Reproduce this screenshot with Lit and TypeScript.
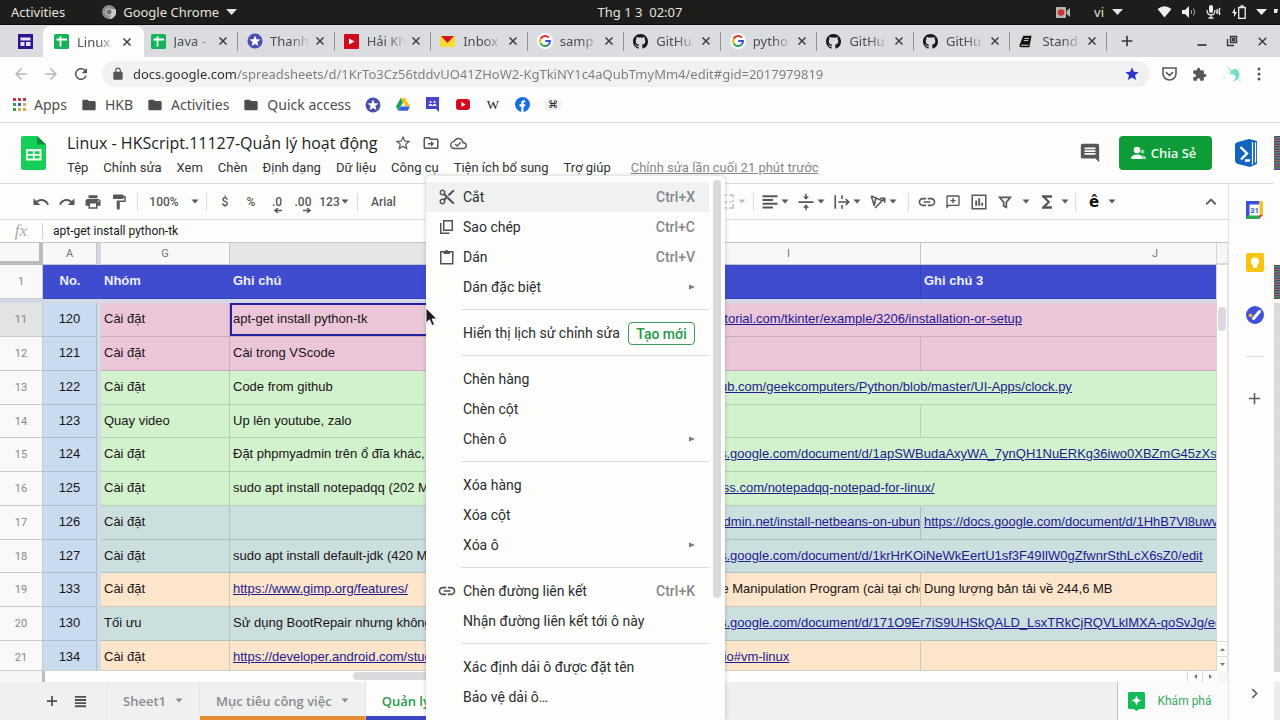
import { LitElement, html, css, svg, nothing, TemplateResult } from "lit";
import { customElement } from "lit/decorators.js";
import { classMap } from "lit/directives/class-map.js";

const icon = (body: TemplateResult, size = 18, box = 24) =>
  html`<svg class="ic" width=${size} height=${size} viewBox="0 0 ${box} ${box}" fill="currentColor" aria-hidden="true">${body}</svg>`;
const path = (d: string) => svg`<path d=${d}></path>`;
const line = (d: string, w = 2) =>
  svg`<path d=${d} fill="none" stroke="currentColor" stroke-width=${w}></path>`;

const caret = html`<svg class="caret" width="8" height="5" viewBox="0 0 8 5" aria-hidden="true"><path d="M.5 .5h7L4 4.5z" fill="currentColor"></path></svg>`;

const P = {
  link: "M3.9 12c0-1.71 1.39-3.1 3.1-3.1h4V7H7c-2.76 0-5 2.24-5 5s2.24 5 5 5h4v-1.9H7c-1.71 0-3.1-1.39-3.1-3.1zM8 13h8v-2H8v2zm9-6h-4v1.9h4c1.71 0 3.1 1.39 3.1 3.1s-1.39 3.1-3.1 3.1h-4V17h4c2.76 0 5-2.24 5-5s-2.24-5-5-5z",
  undo: "M12.5 8c-2.65 0-5.05.99-6.9 2.6L2 7v9h9l-3.62-3.62c1.39-1.16 3.16-1.88 5.12-1.88 3.54 0 6.55 2.31 7.6 5.5l2.37-.78C21.08 11.03 17.15 8 12.5 8z",
  redo: "M18.4 10.6C16.55 8.99 14.15 8 11.5 8c-4.65 0-8.58 3.03-9.96 7.22L3.9 16c1.05-3.19 4.05-5.5 7.6-5.5 1.95 0 3.73.72 5.12 1.88L13 16h9V7l-3.6 3.6z",
  print: "M19 8H5c-1.66 0-3 1.34-3 3v6h4v4h12v-4h4v-6c0-1.66-1.34-3-3-3zm-3 11H8v-5h8v5zm3-7c-.55 0-1-.45-1-1s.45-1 1-1 1 .45 1 1-.45 1-1 1zm-1-9H6v4h12V3z",
  roller: "M18 4V3c0-.55-.45-1-1-1H5c-.55 0-1 .45-1 1v4c0 .55.45 1 1 1h12c.55 0 1-.45 1-1V6h1v4H9v11c0 .55.45 1 1 1h2c.55 0 1-.45 1-1v-9h8V4h-3z",
  cut: "M9.64 7.64c.23-.5.36-1.05.36-1.64 0-2.21-1.79-4-4-4S2 3.79 2 6s1.79 4 4 4c.59 0 1.14-.13 1.64-.36L10 12l-2.36 2.36C7.14 14.13 6.59 14 6 14c-2.21 0-4 1.79-4 4s1.79 4 4 4 4-1.79 4-4c0-.59-.13-1.14-.36-1.64L12 14l7 7h3v-1L9.64 7.64zM6 8c-1.1 0-2-.89-2-2s.9-2 2-2 2 .89 2 2-.9 2-2 2zm0 12c-1.1 0-2-.89-2-2s.9-2 2-2 2 .89 2 2-.9 2-2 2zm6-7.5c-.28 0-.5-.22-.5-.5s.22-.5.5-.5.5.22.5.5-.22.5-.5.5zM19 3l-6 6 2 2 7-7V3z",
  star: "M12 17.27L18.18 21l-1.64-7.03L22 9.24l-7.19-.61L12 2 9.19 8.63 2 9.24l5.46 4.73L5.82 21z",
  starOutline: "M22 9.24l-7.19-.62L12 2 9.19 8.63 2 9.24l5.46 4.73L5.82 21 12 17.27 18.18 21l-1.63-7.03L22 9.24zM12 15.4l-3.76 2.27 1-4.28-3.32-2.88 4.38-.38L12 6.1l1.71 4.04 4.38.38-3.32 2.88 1 4.28L12 15.4z",
  folderMove: "M20 6h-8l-2-2H4c-1.1 0-2 .9-2 2v12c0 1.1.9 2 2 2h16c1.1 0 2-.9 2-2V8c0-1.1-.9-2-2-2zm0 12H4V6h5.17l2 2H20v10zm-8-1l4-4-4-4v3H8v2h4z",
  cloud: "M19.35 10.04C18.67 6.59 15.64 4 12 4 9.11 4 6.6 5.64 5.35 8.04 2.34 8.36 0 10.91 0 14c0 3.31 2.69 6 6 6h13c2.76 0 5-2.24 5-5 0-2.64-2.05-4.78-4.65-4.96zM19 18H6c-2.21 0-4-1.79-4-4s1.79-4 4-4h.71C7.37 7.69 9.48 6 12 6c3.04 0 5.5 2.46 5.5 5.5v.5H19c1.66 0 3 1.34 3 3s-1.34 3-3 3zm-9-3.82l-2.09-2.09L6.5 13.5 10 17l6.01-6.01-1.41-1.41z",
  comment: "M21.99 4c0-1.1-.89-2-1.99-2H4c-1.1 0-2 .9-2 2v12c0 1.1.9 2 2 2h14l4 4-.01-18zM18 14H6v-2h12v2zm0-3H6V9h12v2zm0-3H6V6h12v2z",
  addComment: "M22 4c0-1.1-.9-2-2-2H4c-1.1 0-2 .9-2 2v18l4-4h14c1.1 0 2-.9 2-2V4zm-2 12H4V4h16v12zM11 14h2v-3h3V9h-3V6h-2v3H8v2h3z",
  chart: "M9.500 17H7v-7h2.500v7zm4 0H11V7h2.500v10zm4 0H15v-4h2.500v4zM20 20H4V4h16v16zM2 2v20h20V2z",
  sigma: "M18 4H6v2l6.5 6L6 18v2h12v-3h-7l5-5-5-5h7z",
  folder: "M10 4H4c-1.1 0-2 .9-2 2v12c0 1.1.9 2 2 2h16c1.1 0 2-.9 2-2V8c0-1.1-.9-2-2-2h-8l-2-2z",
  lock: "M18 8h-1V6c0-2.76-2.24-5-5-5S7 3.24 7 6v2H6c-1.1 0-2 .9-2 2v10c0 1.1.9 2 2 2h12c1.1 0 2-.9 2-2V10c0-1.1-.9-2-2-2zM9 6c0-1.66 1.34-3 3-3s3 1.34 3 3v2H9V6z",
  back: "M20 11H7.83l5.59-5.59L12 4l-8 8 8 8 1.41-1.41L7.83 13H20v-2z",
  fwd: "M12 4l-1.41 1.41L16.17 11H4v2h12.17l-5.58 5.59L12 20l8-8z",
  reload: "M17.65 6.35C16.2 4.9 14.21 4 12 4c-4.42 0-7.99 3.58-7.99 8s3.57 8 7.99 8c3.73 0 6.84-2.55 7.73-6h-2.08c-.82 2.33-3.04 4-5.65 4-3.31 0-6-2.69-6-6s2.69-6 6-6c1.66 0 3.14.69 4.22 1.78L13 11h7V4l-2.35 2.35z",
  puzzle: "M20.5 11H19V7c0-1.1-.9-2-2-2h-4V3.5C13 2.12 11.88 1 10.5 1S8 2.12 8 3.5V5H4c-1.1 0-1.99.9-1.99 2v3.8H3.5c1.49 0 2.7 1.21 2.7 2.7s-1.21 2.7-2.7 2.7H2V20c0 1.1.9 2 2 2h3.8v-1.5c0-1.49 1.21-2.7 2.7-2.7s2.7 1.21 2.7 2.7V22H17c1.1 0 2-.9 2-2v-4h1.5c1.38 0 2.5-1.12 2.5-2.5S21.88 11 20.5 11z",
  github: "M8 0C3.58 0 0 3.58 0 8c0 3.54 2.29 6.53 5.47 7.59.4.07.55-.17.55-.38 0-.19-.01-.82-.01-1.49-2.01.37-2.53-.49-2.69-.94-.09-.23-.48-.94-.82-1.13-.28-.15-.68-.52-.01-.53.63-.01 1.08.58 1.23.82.72 1.21 1.87.87 2.33.66.07-.52.28-.87.51-1.07-1.78-.2-3.64-.89-3.64-3.95 0-.87.31-1.59.82-2.15-.08-.2-.36-1.02.08-2.12 0 0 .67-.21 2.2.82.64-.18 1.32-.27 2-.27s1.36.09 2 .27c1.53-1.04 2.2-.82 2.2-.82.44 1.1.16 1.92.08 2.12.51.56.82 1.27.82 2.15 0 3.07-1.87 3.75-3.65 3.95.29.25.54.73.54 1.48 0 1.07-.01 1.93-.01 2.2 0 .21.15.46.55.38A8.01 8.01 0 0 0 16 8c0-4.42-3.58-8-8-8z",
};

const close = icon(line("M5 5l14 14M19 5L5 19", 3), 12);
const badgeStar = html`<svg width="16" height="16" viewBox="0 0 16 16" aria-hidden="true"><circle cx="8" cy="8" r="7.5" fill="#4a4fae"></circle><path fill="#fff" d="M8 2.500l1.500 3.800 4 .200-3.100 2.600 1 4L8 10.900l-3.400 2.200 1-4L2.500 6.500l4-.200z"></path></svg>`;
const sheetFav = html`<svg width="15" height="15" viewBox="0 0 15 15" aria-hidden="true"><rect width="15" height="15" rx="1.5" fill="#17b35a"></rect><path d="M6.500 2.500v10M2.500 5.500h10.500" stroke="#fff" stroke-width="1.8"></path></svg>`;
const googleFav = html`<svg width="16" height="16" viewBox="0 0 16 16" aria-hidden="true"><circle cx="8" cy="8" r="8" fill="#fff"></circle><g fill="none" stroke-width="2"><path d="M11.800 4.700A5 5 0 0 0 3.600 5.700" stroke="#e0342b"></path><path d="M3.600 5.700a5 5 0 0 0 0 4.700" stroke="#f5b912"></path><path d="M3.600 10.400a5 5 0 0 0 7.800 1.400" stroke="#2aa34f"></path><path d="M11.400 11.800A5 5 0 0 0 13 8H8.200" stroke="#3558d8"></path></g></svg>`;
const githubFav = html`<svg width="15" height="15" viewBox="0 0 16 16" aria-hidden="true"><path fill="#17191c" d=${P.github}></path></svg>`;
const youtubeFav = html`<svg width="15" height="15" viewBox="0 0 15 15" aria-hidden="true"><rect width="15" height="15" rx="1" fill="#d3091f"></rect><path d="M5 4.500v6l5.500-3z" fill="#fff"></path></svg>`;
const mailFav = html`<svg width="15" height="15" viewBox="0 0 15 15" aria-hidden="true"><path d="M0 2h15v11H0z" fill="#f7dc31"></path><path d="M1 2h13L7.500 9z" fill="#d2172a"></path></svg>`;
const bookFav = html`<svg width="13" height="13" viewBox="0 0 15 15" aria-hidden="true"><path d="M5 1h9.500L12 14H2.200Q0 14 .600 11.500z" fill="#111"></path><path d="M6.300 4h5.200M5.600 6.500h5.200M2.500 11.800h8.500" stroke="#dadce0" stroke-width="1.1"></path></svg>`;

const tabs: [TemplateResult, string][] = [
  [sheetFav, "Linux"], [sheetFav, "Java -"], [badgeStar, "Thanh"], [youtubeFav, "Hải Kh"],
  [mailFav, "Inbox"], [googleFav, "samp"], [githubFav, "GitHu"], [googleFav, "pytho"],
  [githubFav, "GitHu"], [githubFav, "GitHu"], [bookFav, "Stand"],
];

type Row = { n: number; id: string; g: string; h: string; hl?: boolean; i: string; il?: boolean; j?: string; jl?: boolean; tone: string; spill?: boolean };
const rows: Row[] = [
  { n: 11, id: "120", g: "Cài đặt", h: "apt-get install python-tk", i: "https://riptutorial.com/tkinter/example/3206/installation-or-setup", il: true, tone: "pink", spill: true },
  { n: 12, id: "121", g: "Cài đặt", h: "Cài trong VScode", i: "", tone: "pink" },
  { n: 13, id: "122", g: "Cài đặt", h: "Code from github", i: "https://github.com/geekcomputers/Python/blob/master/UI-Apps/clock.py", il: true, tone: "green", spill: true },
  { n: 14, id: "123", g: "Quay video", h: "Up lên youtube, zalo", i: "", tone: "green" },
  { n: 15, id: "124", g: "Cài đặt", h: "Đặt phpmyadmin trên ổ đĩa khác, vẫn chạy", i: "https://docs.google.com/document/d/1apSWBudaAxyWA_7ynQH1NuERKg36iwo0XBZmG45zXsQ/edit", il: true, tone: "green", spill: true },
  { n: 16, id: "125", g: "Cài đặt", h: "sudo apt install notepadqq (202 MB)", i: "https://itsfoss.com/notepadqq-notepad-for-linux/", il: true, tone: "green", spill: true },
  { n: 17, id: "126", g: "Cài đặt", h: "", i: "https://tecadmin.net/install-netbeans-on-ubuntu/", il: true, j: "https://docs.google.com/document/d/1HhB7Vl8uwvfgQ", jl: true, tone: "teal" },
  { n: 18, id: "127", g: "Cài đặt", h: "sudo apt install default-jdk (420 MB)", i: "https://docs.google.com/document/d/1krHrKOiNeWkEertU1sf3F49IlW0gZfwnrSthLcX6sZ0/edit", il: true, tone: "teal", spill: true },
  { n: 19, id: "133", g: "Cài đặt", h: "https://www.gimp.org/features/", hl: true, i: "GNU Image Manipulation Program (cài tại chợ)", j: "Dung lượng bản tải về 244,6 MB", tone: "orange" },
  { n: 20, id: "130", g: "Tối ưu", h: "Sử dụng BootRepair nhưng không được", i: "https://docs.google.com/document/d/171O9Er7iS9UHSkQALD_LsxTRkCjRQVLklMXA-qoSvJg/edit", il: true, tone: "teal", spill: true },
  { n: 21, id: "134", g: "Cài đặt", h: "https://developer.android.com/studio", hl: true, i: "https://studio#vm-linux", il: true, tone: "orange" },
];

type Item = { label: string; key?: string; icon?: TemplateResult; sub?: boolean; badge?: string; active?: boolean } | "-";
const items: Item[] = [
  { label: "Cắt", key: "Ctrl+X", icon: icon(path(P.cut), 18), active: true },
  { label: "Sao chép", key: "Ctrl+C", icon: html`<svg class="ic" width="16" height="16" viewBox="0 0 16 16" fill="none" stroke="currentColor" stroke-width="1.5"><rect x="4.75" y="1.75" width="8.5" height="9.5"></rect><path d="M1.750 4v10.250H10.500"></path></svg>` },
  { label: "Dán", key: "Ctrl+V", icon: html`<svg class="ic" width="16" height="16" viewBox="0 0 16 16" fill="none" stroke="currentColor" stroke-width="1.5"><rect x="1.75" y="2.75" width="12" height="12"></rect><path fill="currentColor" stroke="none" d="M4.500 2.500h1.500a1.800 1.800 0 0 1 3.500 0H11v2.500H4.500z"></path></svg>` },
  { label: "Dán đặc biệt", sub: true },
  "-",
  { label: "Hiển thị lịch sử chỉnh sửa", badge: "Tạo mới" },
  "-",
  { label: "Chèn hàng" }, { label: "Chèn cột" }, { label: "Chèn ô", sub: true },
  "-",
  { label: "Xóa hàng" }, { label: "Xóa cột" }, { label: "Xóa ô", sub: true },
  "-",
  { label: "Chèn đường liên kết", key: "Ctrl+K", icon: icon(path(P.link), 20) },
  { label: "Nhận đường liên kết tới ô này" },
  "-",
  { label: "Xác định dải ô được đặt tên" }, { label: "Bảo vệ dải ô…" },
];

const shared = css`
  :host { display: block; box-sizing: border-box; }
  *, *::before, *::after { box-sizing: border-box; }
  button { font: inherit; color: inherit; background: none; border: 0; padding: 0; margin: 0; display: flex; align-items: center; justify-content: center; white-space: nowrap; }
  a { color: inherit; text-decoration: none; }
  svg { display: block; flex: none; }
`;

@customElement("browser-chrome")
export class BrowserChrome extends LitElement {
  static styles = [shared, css`
    :host { font-family: "Noto Sans", "Open Sans", sans-serif; color: #4b4d50; }
    .top { display: grid; grid-template-columns: 1fr auto 1fr; align-items: center; height: 25px; background: #1d1d1b; color: #e4e3df; font-size: 13px; border-bottom: 1px solid #0b0b0b; }
    .top .left { display: flex; align-items: center; gap: 37px; padding-left: 11px; }
    .top .app { gap: 7px; }
    .top .right { display: flex; align-items: center; justify-content: flex-end; gap: 10px; }
    .top .lang { gap: 8px; margin: 0 24px 0 14px; }
    .strip { display: flex; height: 32px; background: #dadce0; align-items: stretch; padding-left: 7px; font-size: 13px; }
    .pinned { width: 38px; padding: 0 2px 0 0; }
    .tabs { flex: 1; display: flex; min-width: 0; }
    .tab { flex: 1; min-width: 0; position: relative; display: flex; align-items: center; padding: 0 7px 0 9px; }
    .tab::after { content: ""; position: absolute; right: 0; top: 7px; height: 19px; width: 1px; background: #8f9297; }
    .fav { width: 16px; margin-right: 7px; flex: none; }
    .tab .name { flex: 1; min-width: 0; overflow: hidden; white-space: nowrap; -webkit-mask-image: linear-gradient(90deg, #000 50%, transparent 95%); mask-image: linear-gradient(90deg, #000 50%, transparent 95%); }
    .tab .x { width: 16px; height: 16px; color: #3c3e41; flex: none; }
    .tab.on { background: #fdfefc; border-radius: 8px 8px 0 0; box-shadow: 2px 0 0 #fdfefc, -2px 0 0 #fdfefc; margin-top: 1px; }
    .tab.on::after, .tab.quiet::after { background: none; }
    .wm { display: flex; align-items: center; width: 173px; padding: 0 11px 0 12px; color: #35373a; }
    .sp { flex: 1; }
    .wm .g { display: flex; gap: 18px; align-items: center; }
    .nav { display: flex; align-items: center; height: 34px; background: #fdfefc; padding: 0 19px 0 12px; color: #55575a; gap: 12px; }
    .nav button.off { color: #b5b7b8; }
    .url { flex: 1; display: flex; align-items: center; gap: 8px; height: 26px; border-radius: 13px; background: #f0f1f0; padding: 0 10px 0 9px; }
    .url input { flex: 1; min-width: 0; border: 0; outline: 0; padding: 0; font: inherit; font-size: 13px; background: linear-gradient(90deg, #2b2d30 104px, #797c80 104px); -webkit-background-clip: text; background-clip: text; color: transparent; }
    .ext { display: flex; align-items: center; gap: 15px; }
    .marks { display: flex; align-items: center; height: 32px; background: #fdfefc; border-bottom: 1px solid #dcdddb; padding: 0 13px 4px; font-size: 14px; gap: 14px; }
    .marks a { display: flex; align-items: center; gap: 8px; white-space: nowrap; }
    .marks .sites { display: flex; gap: 14px; align-items: center; }
    .marks .sites a { width: 16px; justify-content: center; }
    .wiki { font-family: "Liberation Serif", serif; font-size: 13px; color: #222; }
    .cmd { font-family: "DejaVu Sans", sans-serif; font-size: 10px; color: #111; background: #f0f0ee; }
  `];
  render() {
    return html`
      <header class="top">
        <div class="left"><button>Activities</button>
          <button class="app"><svg width="14" height="14" viewBox="0 0 14 14"><circle cx="7" cy="7" r="7" fill="#8b8b89"></circle><path d="M7 4h6.500A7 7 0 0 1 7 14l2.700-5.500" fill="#c9c9c7"></path><circle cx="7" cy="7" r="3.2" fill="#6e6e6c" stroke="#d8d8d6"></circle></svg>Google Chrome<svg width="11" height="6" viewBox="0 0 11 6"><path d="M0 0h11L5.500 6z" fill="#e4e3df"></path></svg></button></div>
        <time>Thg 1 3&nbsp; 02:07</time>
        <div class="right">
          <svg width="14" height="11" viewBox="0 0 14 11"><rect width="10" height="11" rx="1" fill="#b5b5b2"></rect><circle cx="5" cy="5.5" r="3.3" fill="#d02f38"></circle><path d="M10.500 4L14 1v9l-3.500-3z" fill="#b5b5b2"></path></svg>
          <button class="lang">vi<svg width="11" height="6" viewBox="0 0 11 6"><path d="M0 0h11L5.500 6z" fill="#e4e3df"></path></svg></button>
          <svg width="15" height="12" viewBox="0 0 15 12"><path d="M.500 3Q7.500-2.500 14.500 3L7.500 11.500z" fill="#efeeea"></path></svg>
          <svg width="14" height="12" viewBox="0 0 14 12"><path d="M0 4h3l4-4v12L3 8H0z" fill="#efeeea"></path><path d="M9 4q1.500 2 0 4M11.500 2.500q2.500 3.500 0 7" stroke="#aaa" fill="none"></path></svg>
          <svg width="16" height="14" viewBox="0 0 16 14"><rect x="3" y="0" width="4" height="8" rx="2" fill="#efeeea"></rect><path d="M1 5q0 5 4 5t4-5M5 10v3M2.500 13h5M11.500 4q-1.500 2.500 0 5M14 3q-2 3.500 0 7" stroke="#efeeea" stroke-width="1.3" fill="none"></path></svg>
          <svg width="14" height="14" viewBox="0 0 14 14"><path d="M3 3L0 8h2v4l3-5H3z" fill="#efeeea"></path><path d="M6.700 2.500h6.500v11H6.700zM8.500 1h3" stroke="#efeeea" stroke-width="1.3" fill="none"></path></svg>
          <svg width="24" height="6" viewBox="0 0 24 6"><path d="M0 0h11L5.500 6zM18 0h4l-1 4h-3z" fill="#efeeea"></path></svg>
        </div>
      </header>
      <div class="strip">
        <button class="pinned" aria-label="Data"><svg width="15" height="15" viewBox="0 0 15 15"><rect width="15" height="15" fill="#33128e"></rect><path d="M2.500 3.500h10v3h-10zM2.500 8h4v4h-4zM8 8h4.500v4H8z" fill="#e9e5f7"></path></svg></button>
        <div class="tabs" role="tablist">${tabs.map(([f, n], k) => html`<div role="tab" class=${classMap({ tab: true, on: k === 0, quiet: k === 0 })}><span class="fav">${f}</span><span class="name">${n}</span><button class="x" aria-label="Đóng">${close}</button></div>`)}</div>
        <div class="wm"><button aria-label="Thẻ mới">${icon(line("M12 4v16M4 12h16", 2.5), 16)}</button><span class="sp"></span>
          <span class="g"><button aria-label="Thu nhỏ">${icon(line("M3 20h18", 3.5), 12)}</button><button aria-label="Khôi phục">${icon(svg`<path d="M9 3h12v12H9zM13 7h4v4h-4zM3 8v13h13" fill="none" stroke="currentColor" stroke-width="2.8"></path>`, 12)}</button><button aria-label="Đóng">${icon(line("M5 5l14 14M19 5L5 19", 2.5), 13)}</button></span></div>
      </div>
      <div class="nav">
        <button class="off" aria-label="Lùi">${icon(path(P.back), 18)}</button><button class="off" aria-label="Tiến">${icon(path(P.fwd), 18)}</button><button aria-label="Tải lại">${icon(path(P.reload), 18)}</button>
        <div class="url">${icon(path(P.lock), 14)}<input aria-label="Địa chỉ" value="docs.google.com/spreadsheets/d/1KrTo3Cz56tddvUO41ZHoW2-KgTkiNY1c4aQubTmyMm4/edit#gid=2017979819"><svg width="16" height="16" viewBox="0 0 24 24" fill="#2a35d4"><path d=${P.star}></path></svg></div>
        <div class="ext"><svg width="15" height="14" viewBox="0 0 15 14" fill="none" stroke="#55575a" stroke-width="1.6"><path d="M1 1h13v5.500a6.500 6.500 0 0 1-13 0zM4 5.200l3.500 3.300L11 5.200"></path></svg>${icon(path(P.puzzle), 15)}
          <svg width="20" height="18" viewBox="0 0 20 18"><path d="M4 1l6 4.500Q13 3 15.500 5q3 3.500 1.500 7-1.500 4.500-6 4 3-1.500 2.500-5l-3-2-3 .500 1.500-3z" fill="#76dccb"></path><path d="M1 13h2M5 8h2M17 3v2M18 14v3" stroke="#a9ebe0"></path></svg>
          <svg width="4" height="14" viewBox="0 0 4 14" fill="#55575a"><circle cx="2" cy="2" r="1.5"></circle><circle cx="2" cy="7" r="1.5"></circle><circle cx="2" cy="12" r="1.5"></circle></svg></div>
      </div>
      <nav class="marks">
        <a href="#"><svg width="13" height="13" viewBox="0 0 13 13"><path d="M0 0h3v3H0zM5 0h3v3H5zM10 0h3v3h-3z" fill="#c8374b"></path><path d="M0 5h3v3H0zM0 10h3v3H0z" fill="#3d9a52"></path><path d="M5 5h3v3H5z" fill="#3b5bd0"></path><path d="M10 5h3v3h-3zM5 10h3v3H5zM10 10h3v3h-3z" fill="#d8b04a"></path></svg>Apps</a>
        ${["HKB", "Activities", "Quick access"].map(t => html`<a href="#">${icon(path(P.folder), 16)}${t}</a>`)}
        <span class="sites">
          <a href="#" aria-label="Thành tích">${badgeStar}</a>
          <a href="#" aria-label="Drive"><svg width="14" height="13" viewBox="0 0 14 13"><path d="M4.700 0h4.600L14 8.500H9.500z" fill="#f8c51c"></path><path d="M4.700 0L0 8.500 2.300 12.800 7 4.200z" fill="#19a35a"></path><path d="M2.300 12.800L4.700 8.500H14l-2.300 4.300z" fill="#3a62e0"></path></svg></a>
          <a href="#" aria-label="Lớp học"><svg width="13" height="15" viewBox="0 0 13 15"><path d="M0 0h13v15l-3-3H0z" fill="#4945c8"></path><path d="M2.500 9q0-2 2-2t2 2q0-2 2-2t2 2z" fill="#fff"></path><circle cx="4.5" cy="5" r="1.1" fill="#fff"></circle><circle cx="8.5" cy="5" r="1.1" fill="#fff"></circle></svg></a>
          <a href="#" aria-label="YouTube"><svg width="14" height="11" viewBox="0 0 14 11"><rect width="14" height="11" rx="3" fill="#d3091f"></rect><path d="M5.500 3v5l4-2.500z" fill="#fff"></path></svg></a>
          <a href="#" class="wiki">W</a>
          <a href="#" aria-label="Facebook"><svg width="15" height="15" viewBox="0 0 15 15"><circle cx="7.5" cy="7.5" r="7.5" fill="#1470e0"></circle><path d="M6.300 15V9.500H4.500V7.300h1.800V5.800q0-2.600 2.500-2.600h1.400v2H9.300q-.800 0-.800.900v1.200h1.800L10 9.500H8.500V15z" fill="#fff"></path></svg></a>
          <a href="#" class="cmd">⌘</a>
        </span>
      </nav>`;
  }
}

@customElement("doc-header")
export class DocHeader extends LitElement {
  static styles = [shared, css`
    :host { display: flex; align-items: center; height: 61px; background: #fdfefc; border-bottom: 1px solid #dcdddb; padding: 0 16px 0 21px; gap: 19px; color: #55575a; font-family: Roboto, sans-serif; }
    .mid { flex: 1; min-width: 0; display: flex; flex-direction: column; gap: 2px; padding: 4px 0 0 2px; }
    .name { display: flex; align-items: center; gap: 10px; }
    h1 { margin: 0 6px 0 0; font-family: "Open Sans", sans-serif; font-size: 16px; font-weight: 400; line-height: 24px; color: #1c1d1f; white-space: nowrap; }
    .menus { display: flex; align-items: center; gap: 15px; font-size: 13px; line-height: 22px; color: #303235; }
    .menus a { margin-left: 5px; color: #858789; text-decoration: underline; white-space: nowrap; }
    .right { display: flex; align-items: center; gap: 18px; }
    .share { height: 34px; width: 93px; margin-right: 5px; padding-right: 4px; border-radius: 4px; background: #0d9c37; color: #f3fbf4; gap: 4px; font-family: "Open Sans", sans-serif; font-weight: 600; font-size: 13px; }
  `];
  render() {
    return html`
      <svg width="25" height="34" viewBox="0 0 25 34"><path d="M2 0h14l9 8.500V32q0 2-2 2H2q-2 0-2-2V2Q0 0 2 0z" fill="#15cf56"></path><path d="M16 0l9 8.500h-9z" fill="#0c8f3a"></path><path d="M5 13h15.500v11.500H5z" fill="#effcf1"></path><path d="M7 15.200h4.800v2.700H7zM13.700 15.200h4.800v2.700h-4.800zM7 19.700h4.800v2.700H7zM13.700 19.700h4.800v2.700h-4.800z" fill="#15cf56"></path></svg>
      <div class="mid">
        <div class="name"><h1>Linux - HKScript.11127-Quản lý hoạt động</h1>
          <button aria-label="Gắn dấu sao">${icon(path(P.starOutline), 18)}</button><button aria-label="Di chuyển">${icon(path(P.folderMove), 18)}</button><button aria-label="Trạng thái">${icon(path(P.cloud), 17)}</button></div>
        <nav class="menus">${["Tệp", "Chỉnh sửa", "Xem", "Chèn", "Định dạng", "Dữ liệu", "Công cụ", "Tiện ích bổ sung", "Trợ giúp"].map(m => html`<button>${m}</button>`)}<a href="#">Chỉnh sửa lần cuối 21 phút trước</a></nav>
      </div>
      <div class="right">
        <button aria-label="Nhận xét">${icon(path(P.comment), 22)}</button>
        <button class="share"><svg width="16" height="14" viewBox="0 0 16 14" fill="#f3fbf4"><circle cx="6" cy="4" r="3.3"></circle><path d="M0 13q0-4.500 6-4.500T12 13z"></path><circle cx="11.5" cy="5.5" r="2" opacity=".6"></circle><path d="M12.500 13h2.500q0-3-3.500-3.800z" opacity=".7"></path></svg>Chia Sẻ</button>
        <svg width="23" height="28" viewBox="0 0 23 28"><path d="M3 3L14 0l8 2v23l-7 3-12-3Q0 24 0 21V6q0-2.500 3-3z" fill="#1264bd"></path><path d="M17.500 3v22.500M20.500 3.500v20" stroke="#fdfefc" stroke-width="1.2"></path><path d="M5.500 8l6.500 6.500-6 6M10 21.500h5" fill="none" stroke="#fff" stroke-width="2.4"></path></svg>
      </div>`;
  }
}

@customElement("sheet-toolbar")
export class SheetToolbar extends LitElement {
  static styles = [shared, css`
    :host { display: flex; align-items: center; justify-content: space-between; height: 36px; background: #fdfefc; border-bottom: 1px solid #dcdddb; padding-left: 28px; color: #55575a; font-family: Roboto, sans-serif; font-size: 12px; font-weight: 500; }
    .b { width: 26px; height: 26px; flex: none; }
    .sep { width: 1px; height: 18px; background: #dcdddb; margin: 0 5px; flex: none; }
    .left, .right { display: flex; align-items: center; }
    .zoom { width: 58px; gap: 12px; padding-left: 4px; }
    .fmt { width: 36px; gap: 1px; }
    .font { padding-left: 8px; }
    .combo { width: 36px; padding-left: 2px; justify-content: flex-start; gap: 2px; height: 26px; }
    .combo.faded { color: #babcbd; width: 32px; }
    .dd { width: 16px; height: 26px; flex: none; }
    .dd.tight { width: 10px; }
    .right { width: 512px; }
    .sp { flex: 1; }
    .up { width: 34px; }
    .dec { display: grid; justify-items: end; line-height: 12px; padding-top: 6px; }
    .e { font-family: "DejaVu Sans", sans-serif; font-weight: 700; font-size: 15px; color: #111; }
  `];
  render() {
    const b = (label: string, d: string, s = 18) => html`<button class="b" aria-label=${label}>${icon(path(d), s)}</button>`;
    const combo = (label: string, body: TemplateResult, faded = false) => html`<button class=${classMap({ combo: true, faded })} aria-label=${label}>${icon(body, 18)}${caret}</button>`;
    const arrow = (d: string) => html`<svg width="8" height="5" viewBox="0 0 8 5"><path d=${d} fill="none" stroke="currentColor" stroke-width="1.5"></path></svg>`;
    return html`
      <div class="left">${b("Hoàn tác", P.undo)}${b("Làm lại", P.redo)}${b("In", P.print)}${b("Sao chép định dạng", P.roller)}<span class="sep"></span>
        <button class="zoom">100%${caret}</button><span class="sep"></span>
        <button class="b">$</button><button class="b">%</button><button class="b"><span class="dec">.0${arrow("M8 2.500H1.500M4 0L1 2.500 4 5")}</span></button><button class="b"><span class="dec">.00${arrow("M0 2.500h6.500M4 0l3 2.500L4 5")}</span></button><button class="fmt">123${caret}</button><span class="sep"></span>
        <button class="font">Arial</button></div>
      <div class="right">
        ${combo("Đường viền", line("M3 3h3M9 3h3M15 3h5v3M20 9v3M3 12h3M9 12h3M15 12h3M20 15v5h-5M12 20H9M6 20H3v-3M3 9V6", 2), true)}<span class="sep"></span>
        ${combo("Căn ngang", path("M2 3h20v2.500H2zM2 8h14v2.500H2zM2 13h20v2.500H2zM2 18h14v2.500H2z"))}
        ${combo("Căn dọc", path("M2 11h20v2.200H2zM13 1v3.500h3L12 9 8 4.500h3V1zM11 23v-3.500H8l4-4.500 4 4.500h-3V23z"))}
        ${combo("Xuống dòng", svg`<path d="M3 3v18M12 3v5M12 16v5M7 12h14M17 8l4 4-4 4" fill="none" stroke="currentColor" stroke-width="2.2"></path>`)}
        ${combo("Xoay", svg`<path d="M3 4l14 6M3 4l4 13 2-10M8 20L21 7M21 13V7h-6" fill="none" stroke="currentColor" stroke-width="2"></path>`)}
        <span class="sep"></span>
        ${b("Liên kết", P.link, 20)}${b("Nhận xét", P.addComment, 16)}${b("Biểu đồ", P.chart, 18)}
        <button class="b" aria-label="Bộ lọc">${icon(svg`<path d="M4 5h16l-6 7.500V20l-4-2v-5.500z" fill="none" stroke="currentColor" stroke-width="2.6"></path>`, 16)}</button><button class="dd" aria-label="Bộ lọc khác">${caret}</button>
        ${b("Hàm", P.sigma, 20)}<button class="dd tight" aria-label="Hàm khác">${caret}</button><span class="sep"></span>
        <button class="b e">ê</button><button class="dd tight" aria-label="Bộ gõ khác">${caret}</button>
        <span class="sp"></span><button class="up" aria-label="Ẩn trình đơn">${icon(line("M5 15.500l7-7 7 7", 2.8), 16)}</button>
      </div>`;
  }
}

@customElement("sheet-grid")
export class SheetGrid extends LitElement {
  static styles = [shared, css`
    :host { display: grid; grid-template-columns: 1fr 11px; grid-template-rows: 1fr 11px; min-height: 0; background: #fdfefc; font-family: "Liberation Sans", Arial, sans-serif; }
    .view { overflow: hidden; min-width: 0; min-height: 0; border-right: 1px solid #d5d6d4; border-bottom: 1px solid #cfd0ce; }
    table { table-layout: fixed; border-collapse: separate; border-spacing: 0; width: 1390px; font-size: 13px; color: #1a1416; }
    .cr { width: 43px; } .ca { width: 54px; } .cb { width: 4px; } .cg { width: 129px; } .ch { width: 427px; } .ci { width: 264px; }
    th, td { padding: 0 0 2px 3px; text-align: left; font-weight: 400; white-space: nowrap; border: 0 solid rgba(70, 90, 90, .22); border-width: 0 1px 1px 0; }
    thead th { height: 22px; padding: 0; text-align: center; font: 11px Roboto, sans-serif; color: #747678; background: #f7f8f7; border-color: #c4c5c4; }
    thead th.sel { background: #e4e5e5; }
    thead th.corner { border: solid #bbbcba; border-width: 0 4px 4px 0; }
    thead th.bar, td.bar { padding: 0; border: 0; background: #d4d9e7; }
    tbody th { padding: 0; text-align: center; font: 11px Roboto, sans-serif; color: #86888a; background: #f8f9f8; border-color: #c9cac9; }
    tbody th.sel { background: #e2e4e4; }
    tr { height: 34px; }
    thead tr { height: 22px; }
    tr.r4 { height: 33px; }
    tr.gap { height: 4px; }
    tr.gap td { height: 4px; padding: 0; border: 0; background: #d4d9e7; }
    .head td { font-weight: 700; color: #eef1fb; background: #3f4cd0; border-color: #3541b8; border-right-width: 0; }
    .head td.i { border-right-width: 1px; }
    td.a { padding: 0 0 2px; text-align: center; }
    .body td.a { background: #c9dcef; }
    .pink { background: #ebc6d9; } .green { background: #d2f2cd; } .teal { background: #cbdfdf; } .orange { background: #fbe5cb; }
    td.i, td.clip { overflow: hidden; }
    td.i.spill { overflow: visible; border-right-color: transparent; }
    td.cur { box-shadow: inset 2px 2px #2420a0, inset 0 -2px #2420a0; }
    td a { color: #241a90; text-decoration: underline; }
    .vs { display: flex; flex-direction: column; background: #fdfefc; border-right: 1px solid #e2e3e2; }
    .vs .cap { height: 22px; background: #f5f6f5; border-bottom: 2px solid #d8d9d9; }
    .vs .track { flex: 1; padding: 42px 1px 0; }
    .vs .thumb { height: 24px; border-radius: 4px; background: #d9dadd; }
    .vs button { height: 15px; border-top: 1px solid #d9dad9; color: #777; }
    .hs { display: flex; background: #fdfefc; }
    .hs .cap { width: 45px; border-right: 3px solid #bfc0be; background: #f5f6f5; }
    .hs .track { flex: 1; padding: 1px 0 1px 308px; }
    .hs .thumb { width: 340px; height: 8px; border-radius: 4px; background: #d9dadd; }
    .hs button { width: 15px; border-left: 1px solid #d9dad9; color: #777; }
    .end { background: #f5f6f5; }
  `];
  render() {
    const tri = (d: string) => html`<svg width="5" height="5" viewBox="0 0 5 5"><path d=${d} fill="currentColor"></path></svg>`;
    const cell = (t: string, l?: boolean) => (l ? html`<a href="#">${t}</a>` : t);
    return html`
      <div class="view"><table>
        <colgroup><col class="cr"><col class="ca"><col class="cb"><col class="cg"><col class="ch"><col class="ci"><col></colgroup>
        <thead><tr><th class="corner"></th><th>A</th><th class="bar"></th><th>G</th><th class="sel">H</th><th>I</th><th>J</th></tr></thead>
        <tbody>
          <tr class="head"><th>1</th><td class="a">No.</td><td class="bar"></td><td>Nhóm</td><td>Ghi chú</td><td class="i"></td><td>Ghi chú 3</td></tr>
          <tr class="gap"><td colspan="7"></td></tr>
        </tbody>
        <tbody class="body">${rows.map((r, k) => html`<tr class=${classMap({ [r.tone]: true, r4: k % 4 === 3 })}>
          <th class=${classMap({ sel: k === 0 })}>${r.n}</th><td class="a">${r.id}</td><td class="bar"></td><td>${r.g}</td>
          <td class=${classMap({ clip: true, cur: k === 0 })}>${cell(r.h, r.hl)}</td>
          <td class=${classMap({ i: true, spill: !!r.spill })}>${cell(r.i, r.il)}</td>
          <td>${cell(r.j ?? "", r.jl)}</td></tr>`)}</tbody>
      </table></div>
      <div class="vs"><div class="cap"></div><div class="track"><div class="thumb"></div></div><button aria-label="Lên">${tri("M0 4h5L2.500 1z")}</button><button aria-label="Xuống">${tri("M0 1h5L2.500 4z")}</button></div>
      <div class="hs"><div class="cap"></div><div class="track"><div class="thumb"></div></div><button aria-label="Trái">${tri("M4 0v5L1 2.500z")}</button><button aria-label="Phải">${tri("M1 0v5l3-2.500z")}</button></div>
      <div class="end"></div>`;
  }
}

@customElement("context-menu")
export class ContextMenu extends LitElement {
  static styles = [shared, css`
    :host { background: #fdfefc; box-shadow: 0 0 4px rgba(60, 64, 67, .3); border-radius: 4px 4px 0 0; padding: 6px 16px 6px 0; font: 14px Roboto, sans-serif; color: #2a2c2e; overflow: hidden; }
    .item { width: 100%; height: 30px; justify-content: flex-start; padding: 0 14px 0 11px; }
    .item.on { background: #f0f1f1; }
    .slot { width: 20px; margin-right: 6px; display: flex; justify-content: center; color: #505254; }
    .label { flex: 1; text-align: left; }
    .key { color: #85878a; font-weight: 500; }
    .sub { color: #77797b; }
    .badge { border: 1px solid #3c9a5c; border-radius: 4px; color: #22994a; font-weight: 500; height: 23px; line-height: 23px; width: 67px; text-align: center; }
    hr { margin: 7px 0 8px 35px; border: 0; height: 1px; background: #dcdddb; }
    .bar { position: absolute; right: 4px; top: 4px; width: 8px; height: 418px; border-radius: 4px; background: #d8d9dc; }
  `];
  render() {
    return html`<div role="menu">${items.map(i => i === "-" ? html`<hr>` : html`<button role="menuitem" class=${classMap({ item: true, on: !!i.active })}>
      <span class="slot">${i.icon ?? nothing}</span><span class="label">${i.label}</span>
      ${i.key ? html`<span class="key">${i.key}</span>` : nothing}
      ${i.badge ? html`<span class="badge">${i.badge}</span>` : nothing}
      ${i.sub ? html`<svg class="sub" width="6" height="6" viewBox="0 0 6 6"><path d="M0 .500v5L6 3z" fill="currentColor"></path></svg>` : nothing}
    </button>`)}</div><div class="bar"></div>`;
  }
}

@customElement("app-root")
export class AppRoot extends LitElement {
  static styles = [shared, css`
    :host { display: flex; flex-direction: column; height: 100vh; overflow: hidden; background: #fdfefc; position: relative; }
    .page { flex: 1; display: flex; min-height: 0; }
    .docs { flex: 1; min-width: 0; display: flex; flex-direction: column; }
    .work { flex: 1; display: flex; min-height: 0; }
    .main { flex: 1; min-width: 0; display: flex; flex-direction: column; }
    .fx { display: flex; align-items: center; height: 23px; border-bottom: 1px solid #c4c5c4; background: #fdfefc; }
    .fx label { width: 43px; text-align: center; font: italic 17px "Liberation Serif", serif; color: #a9abab; border-right: 1px solid #cfd0cf; line-height: 16px; }
    .fx input { flex: 1; border: 0; outline: 0; background: none; padding: 0 0 1px 10px; font: 12px Roboto, sans-serif; color: #17181a; }
    sheet-grid { flex: 1; }
    .sheets { display: flex; align-items: stretch; height: 38px; background: #eff0f0; font: 600 13px "Open Sans", sans-serif; color: #898b8d; }
    .sheets .tools { display: flex; align-items: center; gap: 15px; padding-left: 46px; width: 107px; color: #505254; border-right: 1px solid #e5e6e6; }
    .st { gap: 9px; padding: 3px 16px 0; border-bottom: 4px solid transparent; border-right: 1px solid #e3e4e4; }
    .st.o { border-bottom-color: #e48d35; }
    .st.b { border-bottom-color: #3a45c4; background: #fdfefc; color: #26984a; }
    .sp { flex: 1; }
    .explore { width: 111px; gap: 12px; padding-right: 6px; background: #fafbfa; border-left: 1px solid #bfc1c0; color: #3aa964; font: 12px Roboto, sans-serif; }
    .side { width: 46px; border-left: 1px solid #e2e3e2; display: flex; flex-direction: column; align-items: center; padding: 17px 0 20px 6px; color: #5b5d60; }
    .side .apps { display: flex; flex-direction: column; align-items: center; gap: 34px; }
    .side hr { width: 18px; height: 1px; border: 0; margin: 32px 0 34px; background: #dcdddb; }
    .edge { width: 6px; display: flex; flex-direction: column; }
    .edge i { display: block; }
    .e1 { height: 13px; } .e2 { height: 34px; } .e3 { height: 95px; } .e4 { height: 34px; } .e5 { height: 4px; } .e6 { flex: 1; } .e7 { height: 10px; } .e8 { height: 38px; background: #eceeee; }
    .dark { background: repeating-linear-gradient(#5d4a66 0 1px, #3f8f55 1px 2px, #6a5ab0 2px 3px, #555 3px 4px, #a06a70 4px 5px); }
    .light { background: repeating-linear-gradient(#d9dbe0 0 2px, #e4d3de 2px 3px, #d6e2da 3px 5px, #d8d8da 5px 6px); }
    context-menu { position: absolute; left: 426px; top: 176px; bottom: 0; width: 299px; }
    .pointer { position: absolute; left: 425px; top: 307px; }
  `];
  render() {
    return html`
      <browser-chrome></browser-chrome>
      <div class="page">
        <div class="docs">
          <doc-header></doc-header>
          <div class="work">
            <main class="main">
              <sheet-toolbar></sheet-toolbar>
              <div class="fx"><label for="fx">fx</label><input id="fx" value="apt-get install python-tk"></div>
              <sheet-grid></sheet-grid>
              <div class="sheets">
                <div class="tools"><button aria-label="Thêm trang tính">${icon(line("M12 2v20M2 12h20", 3.5), 12)}</button>
                  <button aria-label="Tất cả trang tính">${icon(path("M3 3h18v3H3zM3 8h18v3H3zM3 13h18v3H3zM3 18h18v3H3z"), 15)}</button></div>
                <button class="st">Sheet1${caret}</button><button class="st o">Mục tiêu công việc${caret}</button><button class="st b">Quản lý hoạt động${caret}</button>
                <span class="sp"></span>
                <button class="explore"><svg width="17" height="19" viewBox="0 0 17 19"><path d="M1.500 0h14q1.500 0 1.500 1.500v14q0 1.500-1.500 1.500h-4l-3 2-3-2h-4Q0 17 0 15.500v-14Q0 0 1.500 0z" fill="#14bc57"></path><path d="M8.500 3.500l1.400 3.600 3.600 1.400-3.600 1.400-1.400 3.600-1.400-3.600L3.500 8.500l3.600-1.400z" fill="#fff"></path></svg>Khám phá</button>
              </div>
            </main>
            <aside class="side">
              <div class="apps">
                <button aria-label="Lịch"><svg width="17" height="18" viewBox="0 0 17 18"><path d="M0 0h14v4H4v14H0z" fill="#3c50dd"></path><path d="M13 0h2q2 0 2 2v12h-4z" fill="#edc22b"></path><path d="M2 14h11v4H1q-1 0-1-1z" fill="#2aa852"></path><path d="M13 14h4l-4 4z" fill="#d33b30"></path><path d="M3.500 3.500h10v11h-10z" fill="#fff"></path><text x="8.5" y="12" font-size="8" font-weight="700" font-family="Roboto" text-anchor="middle" fill="#4a5bd4">31</text></svg></button>
                <button aria-label="Keep"><svg width="18" height="19" viewBox="0 0 18 19"><rect width="18" height="19" rx="2" fill="#f6c514"></rect><circle cx="9" cy="8.5" r="4" fill="#fff"></circle><path d="M7 11h4v4H7z" fill="#fff"></path></svg></button>
                <button aria-label="Tasks"><svg width="18" height="18" viewBox="0 0 18 18"><circle cx="9" cy="9" r="9" fill="#4350d8"></circle><path d="M7.500 12.500l6-7" stroke="#fff" stroke-width="3" stroke-linecap="round"></path><circle cx="4.5" cy="9.3" r="1.9" fill="#e5bf45"></circle></svg></button>
              </div>
              <hr>
              <button aria-label="Tải tiện ích">${icon(line("M12 3v18M3 12h18", 2.5), 15)}</button>
              <span class="sp"></span>
              <button aria-label="Ẩn bảng điều khiển">${icon(line("M8 4l8 8-8 8", 3), 13)}</button>
            </aside>
          </div>
        </div>
        <div class="edge" aria-hidden="true"><i class="e1"></i><i class="e2 dark"></i><i class="e3"></i><i class="e4 dark"></i><i class="e5"></i><i class="e6 light"></i><i class="e7"></i><i class="e8"></i></div>
      </div>
      <context-menu></context-menu>
      <svg class="pointer" width="13" height="20" viewBox="0 0 13 20" aria-hidden="true"><path d="M1 1v15l3.500-3.300L7 18.500l2.500-1.100-2.400-5.500H12z" fill="#1d1d1f" stroke="#f0f0f0"></path></svg>`;
  }
}
